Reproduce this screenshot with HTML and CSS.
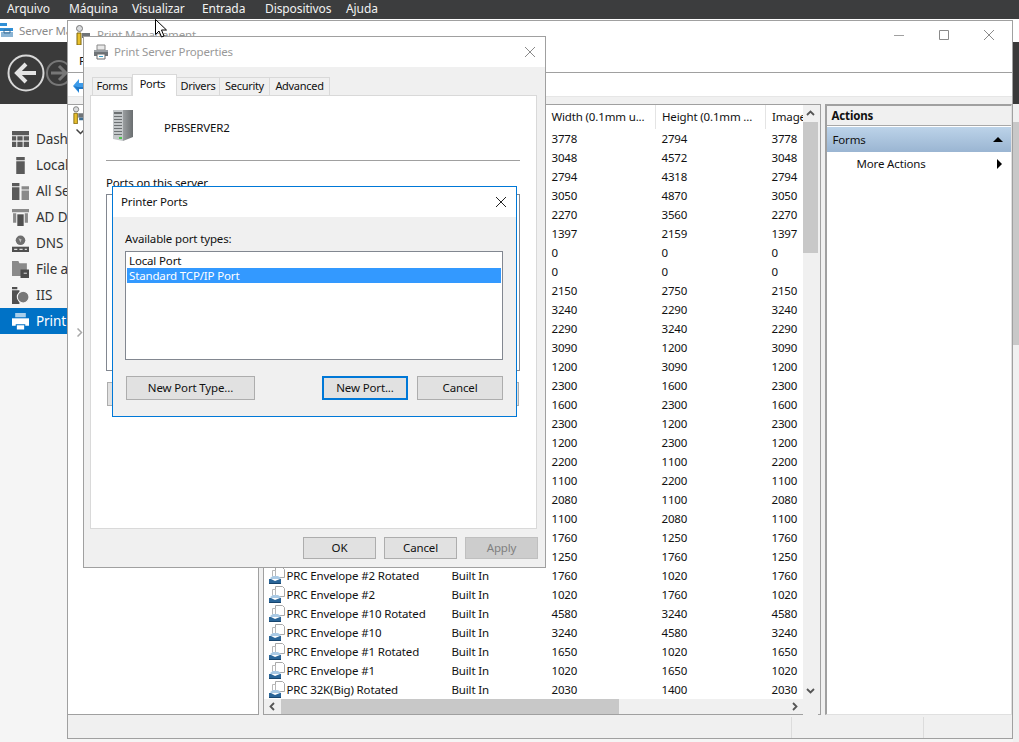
FILE: index.html
```html
<!DOCTYPE html>
<html lang="en">
<head>
<meta charset="utf-8">
<title>Print Server Properties</title>
<link rel="stylesheet" href="styles.css">
</head>
<body>
<svg class="defs" width="0" height="0">
  <defs>
    <symbol id="i-form" viewBox="0 0 17 18">
      <path d="M6.500 1.500h7l2 2v8h-9z" fill="#fff" stroke="#a8a8a8"/>
      <path d="M3.500 4.500h3v6h-3z" fill="#fff" stroke="#b8b8b8"/>
      <path d="M1 12l3-2h5l3 2-1 1H2z" fill="#a9c9e4"/>
      <path d="M0 13h2l4 2 5-2h1v4H0z" fill="#2a6598"/>
      <path d="M0 17h12v1H0z" fill="#17456e"/>
    </symbol>
    <symbol id="i-printer" viewBox="0 0 16 16">
      <path d="M4 1h8v5H4z" fill="#e8e8e8" stroke="#8a8a8a"/>
      <path d="M1 6h14v6H1z" fill="#6f7478"/>
      <path d="M1 6h14v2H1z" fill="#9a9fa3"/>
      <path d="M4 10h8v5H4z" fill="#fff" stroke="#6a6a6a"/>
      <path d="M6 12h4v1H6z" fill="#38a0c8"/>
    </symbol>
    <symbol id="i-mgmt" viewBox="0 0 16 20">
      <path d="M1 8h4v12H1z" fill="#e9c02c" stroke="#7a6410"/>
      <circle cx="3.500" cy="3.500" r="3" fill="#d9dbdd" stroke="#777"/>
      <path d="M6 8h8v5H6z" fill="#6f7478"/>
      <path d="M7 13h7v3H7z" fill="#3f6f93"/>
    </symbol>
  </defs>
</svg>

<div class="menubar">
  <span class="menu-item">Arquivo</span>
  <span class="menu-item">Máquina</span>
  <span class="menu-item">Visualizar</span>
  <span class="menu-item">Entrada</span>
  <span class="menu-item">Dispositivos</span>
  <span class="menu-item">Ajuda</span>
</div>

<div class="desktop">
  <section class="win server-manager">
    <header class="sm-title">
      <svg class="sm-logo" viewBox="0 0 14 15" width="14" height="15"><path d="M0 0h7v3H0z" fill="#2f8fd6"/><path d="M0 5h13v3H0z" fill="#2f8fd6"/><path d="M1 9h12v5H1z" fill="#8ab4d4"/><path d="M4 7h6v3H4z" fill="none" stroke="#3a6f98"/></svg>
      <span>Server Manager</span>
    </header>
    <div class="sm-nav">
      <svg class="nav-back" viewBox="0 0 38 38" width="38" height="38"><circle cx="19" cy="19" r="17.500" fill="none" stroke="#d8d8d8" stroke-width="2"/><path d="M29 19H11M19 10l-9 9 9 9" fill="none" stroke="#e4e4e4" stroke-width="4"/></svg>
      <svg class="nav-fwd" viewBox="0 0 26 26" width="26" height="26"><circle cx="13" cy="13" r="12" fill="none" stroke="#777" stroke-width="2"/><path d="M5 13h14M13 6l7 7-7 7" fill="none" stroke="#777" stroke-width="3"/></svg>
    </div>
    <div class="sm-main">
      <nav class="sm-side">
        <div class="side-row"><svg class="side-ico" viewBox="0 0 16 16"><path d="M0 0h16v4H0zM0 5h4v4H0zM0 10h4v5H0zM5 5h5v4H5zM5 10h5v5H5zM11 5h5v4h-5zM11 10h5v5h-5z" fill="#5a5a5a"/></svg><span>Dashboard</span></div>
        <div class="side-row"><svg class="side-ico" viewBox="0 0 16 16"><path d="M4 0h8v3H4zM4 4h8v12H4z" fill="#5a5a5a"/></svg><span>Local Server</span></div>
        <div class="side-row"><svg class="side-ico" viewBox="0 0 16 16"><path d="M0 0h7v3H0zM0 4h7v12H0z" fill="#5a5a5a"/><path d="M9 3h7v3H9zM9 7h7v9H9z" fill="#8a8a8a"/></svg><span>All Servers</span></div>
        <div class="side-row"><svg class="side-ico" viewBox="0 0 16 16"><path d="M0 0h16v3H0zM1 4h3v9H1zM12 4h3v9h-3z" fill="#8a8a8a"/><path d="M5 5h6v11H5z" fill="#505050"/></svg><span>AD DS</span></div>
        <div class="side-row"><svg class="side-ico" viewBox="0 0 16 16"><circle cx="8" cy="5" r="4.500" fill="#6e6e6e"/><path d="M6 3l3 1-1 3z" fill="#bcbcbc"/><path d="M0 11h16v5H0z" fill="#505050"/><path d="M2 13h3v1H2zM7 13h3v1H7zM12 13h2v1h-2z" fill="#ddd"/></svg><span>DNS</span></div>
        <div class="side-row"><svg class="side-ico" viewBox="0 0 16 16"><path d="M0 0h6l1 2h7v12H0z" fill="#8a8a8a"/><path d="M8 8h8v8H8z" fill="#4c4c4c"/><path d="M11 11h3v1h-3z" fill="#ddd"/></svg><span>File and</span></div>
        <div class="side-row"><svg class="side-ico" viewBox="0 0 16 16"><path d="M0 0h5v2H0zM0 3h7v13H0z" fill="#505050"/><circle cx="10.500" cy="9.500" r="5.500" fill="#777" stroke="#f5f5f5"/></svg><span>IIS</span></div>
        <div class="side-row selected"><svg class="side-ico" viewBox="0 0 16 16"><path d="M3 0h10v4H3z" fill="#a9cfea"/><path d="M0 5h16v7H0z" fill="#fff"/><path d="M4 11h8v5H4z" fill="#fff" stroke="#0072c6"/></svg><span>Print Services</span></div>
      </nav>
      <div class="sm-scroll"><div class="sm-thumb"></div></div>
    </div>
  </section>

  <section class="win print-mgmt">
    <header class="pm-title">
      <svg class="pm-logo" width="16" height="20"><use href="#i-mgmt"/></svg>
      <span class="pm-name">Print Management</span>
      <div class="pm-controls">
        <svg viewBox="0 0 10 10" width="10" height="10"><path d="M0 5.500h10" stroke="#a0a0a0"/></svg>
        <svg viewBox="0 0 10 10" width="10" height="10"><path d="M.5 .5h9v9h-9z" fill="none" stroke="#8a8a8a"/></svg>
        <svg viewBox="0 0 10 10" width="10" height="10"><path d="M0 0l10 10M10 0L0 10" stroke="#8a8a8a"/></svg>
      </div>
    </header>
    <div class="pm-menu"><span>File</span></div>
    <div class="pm-tools">
      <svg viewBox="0 0 12 14" width="12" height="14"><path d="M0 7l6-7v4h6v6H6v4z" fill="#3d9be9"/><path d="M1 7l5 6v-3h6V8H5z" fill="#1e78c8"/></svg>
    </div>
    <div class="pm-panes">
      <div class="pane tree">
        <svg class="tree-root" width="14" height="18"><use href="#i-mgmt"/></svg>
        <svg class="chev-down" viewBox="0 0 9 6" width="9" height="6"><path d="M.5 .5l4 4 4-4" fill="none" stroke="#444" stroke-width="1.500"/></svg>
        <svg class="chev-right" viewBox="0 0 6 9" width="6" height="9"><path d="M.5 .5l4 4-4 4" fill="none" stroke="#a8a8a8" stroke-width="1.500"/></svg>
      </div>
      <div class="pane list">
        <div class="list-view">
          <table class="forms">
            <colgroup><col class="c-name"><col class="c-type"><col class="c-num"><col class="c-num"><col class="c-num"></colgroup>
            <thead><tr><th></th><th></th><th>Width (0.1mm u...</th><th>Height (0.1mm ...</th><th>Image</th></tr></thead>
            <tbody>
              <tr><td></td><td></td><td>3778</td><td>2794</td><td>3778</td></tr>
              <tr><td></td><td></td><td>3048</td><td>4572</td><td>3048</td></tr>
              <tr><td></td><td></td><td>2794</td><td>4318</td><td>2794</td></tr>
              <tr><td></td><td></td><td>3050</td><td>4870</td><td>3050</td></tr>
              <tr><td></td><td></td><td>2270</td><td>3560</td><td>2270</td></tr>
              <tr><td></td><td></td><td>1397</td><td>2159</td><td>1397</td></tr>
              <tr><td></td><td></td><td>0</td><td>0</td><td>0</td></tr>
              <tr><td></td><td></td><td>0</td><td>0</td><td>0</td></tr>
              <tr><td></td><td></td><td>2150</td><td>2750</td><td>2150</td></tr>
              <tr><td></td><td></td><td>3240</td><td>2290</td><td>3240</td></tr>
              <tr><td></td><td></td><td>2290</td><td>3240</td><td>2290</td></tr>
              <tr><td></td><td></td><td>3090</td><td>1200</td><td>3090</td></tr>
              <tr><td></td><td></td><td>1200</td><td>3090</td><td>1200</td></tr>
              <tr><td></td><td></td><td>2300</td><td>1600</td><td>2300</td></tr>
              <tr><td></td><td></td><td>1600</td><td>2300</td><td>1600</td></tr>
              <tr><td></td><td></td><td>2300</td><td>1200</td><td>2300</td></tr>
              <tr><td></td><td></td><td>1200</td><td>2300</td><td>1200</td></tr>
              <tr><td></td><td></td><td>2200</td><td>1100</td><td>2200</td></tr>
              <tr><td></td><td></td><td>1100</td><td>2200</td><td>1100</td></tr>
              <tr><td></td><td></td><td>2080</td><td>1100</td><td>2080</td></tr>
              <tr><td></td><td></td><td>1100</td><td>2080</td><td>1100</td></tr>
              <tr><td></td><td></td><td>1760</td><td>1250</td><td>1760</td></tr>
              <tr><td></td><td></td><td>1250</td><td>1760</td><td>1250</td></tr>
              <tr><td><svg class="f-ico"><use href="#i-form"/></svg>PRC Envelope #2 Rotated</td><td>Built In</td><td>1760</td><td>1020</td><td>1760</td></tr>
              <tr><td><svg class="f-ico"><use href="#i-form"/></svg>PRC Envelope #2</td><td>Built In</td><td>1020</td><td>1760</td><td>1020</td></tr>
              <tr><td><svg class="f-ico"><use href="#i-form"/></svg>PRC Envelope #10 Rotated</td><td>Built In</td><td>4580</td><td>3240</td><td>4580</td></tr>
              <tr><td><svg class="f-ico"><use href="#i-form"/></svg>PRC Envelope #10</td><td>Built In</td><td>3240</td><td>4580</td><td>3240</td></tr>
              <tr><td><svg class="f-ico"><use href="#i-form"/></svg>PRC Envelope #1 Rotated</td><td>Built In</td><td>1650</td><td>1020</td><td>1650</td></tr>
              <tr><td><svg class="f-ico"><use href="#i-form"/></svg>PRC Envelope #1</td><td>Built In</td><td>1020</td><td>1650</td><td>1020</td></tr>
              <tr><td><svg class="f-ico"><use href="#i-form"/></svg>PRC 32K(Big) Rotated</td><td>Built In</td><td>2030</td><td>1400</td><td>2030</td></tr>
            </tbody>
          </table>
        </div>
        <div class="vscroll">
          <svg class="sb-btn" viewBox="0 0 15 17"><path d="M4 10l3.500-3.500L11 10" fill="none" stroke="#555" stroke-width="1.800"/></svg>
          <div class="vtrack"><div class="vthumb"></div></div>
          <svg class="sb-btn" viewBox="0 0 15 17"><path d="M4 7l3.500 3.500L11 7" fill="none" stroke="#555" stroke-width="1.800"/></svg>
        </div>
        <div class="hscroll">
          <svg class="sb-h" viewBox="0 0 17 15"><path d="M10 4L6.500 7.500 10 11" fill="none" stroke="#555" stroke-width="1.800"/></svg>
          <div class="htrack"><div class="hthumb"></div></div>
          <svg class="sb-h" viewBox="0 0 17 15"><path d="M7 4l3.500 3.500L7 11" fill="none" stroke="#555" stroke-width="1.800"/></svg>
        </div>
      </div>
      <div class="pane actions">
        <div class="act-head">Actions</div>
        <div class="act-group"><span>Forms</span><i class="tri-up"></i></div>
        <div class="act-item"><span>More Actions</span><i class="tri-right"></i></div>
      </div>
    </div>
    <footer class="pm-status"><div class="st-a"></div><div class="st-b"></div><div class="st-c"></div></footer>
  </section>

  <section class="win props">
    <header class="dlg-title">
      <svg class="props-logo" width="16" height="16"><use href="#i-printer"/></svg>
      <span>Print Server Properties</span>
      <svg class="props-close" viewBox="0 0 10 10" width="10" height="10"><path d="M0 0l10 10M10 0L0 10" stroke="#8a8a8a"/></svg>
    </header>
    <div class="props-body">
      <div class="tabs">
        <span class="tab t-forms">Forms</span>
        <span class="tab active t-ports">Ports</span>
        <span class="tab t-drivers">Drivers</span>
        <span class="tab t-security">Security</span>
        <span class="tab t-advanced">Advanced</span>
      </div>
      <div class="tab-panel">
        <div class="srv-row">
          <svg class="srv-ico" viewBox="0 0 20 32" width="20" height="32">
            <defs><linearGradient id="srvside" x1="0" x2="1" y1="0" y2="0"><stop offset="0" stop-color="#9a9ea0"/><stop offset="1" stop-color="#6a6e70"/></linearGradient></defs>
            <path d="M0 1l10 0 0 31-10-2z" fill="#c4c8ca"/>
            <path d="M10 1l10 0 0 27-10 4z" fill="url(#srvside)"/>
            <path d="M1 3h8v2H1zM1 7h8v1H1zM1 10h8v1H1zM1 13h8v1H1zM1 16h8v1H1zM1 19h8v1H1zM1 22h8v1H1zM1 25h8v1H1z" fill="#6d7173"/>
            <path d="M6 28h3v2H6z" fill="#4fc34f"/>
          </svg>
          <span class="srv-name">PFBSERVER2</span>
        </div>
        <hr class="rule">
        <div class="ports-label">Ports on this server</div>
        <div class="ports-box"></div>
        <div class="ports-btns">
          <span class="btn grow"></span>
          <span class="btn grow"></span>
          <span class="btn grow"></span>
        </div>
      </div>
      <div class="dlg-foot">
        <span class="btn w73">OK</span>
        <span class="btn w73">Cancel</span>
        <span class="btn w73 disabled">Apply</span>
      </div>
    </div>
  </section>

  <section class="win ports-dlg">
    <header class="pp-title">
      <span>Printer Ports</span>
      <svg viewBox="0 0 10 10" width="10" height="10"><path d="M0 0l10 10M10 0L0 10" stroke="#222"/></svg>
    </header>
    <div class="pp-body">
      <div class="pp-label">Available port types:</div>
      <div class="pp-list">
        <div class="pp-opt">Local Port</div>
        <div class="pp-opt sel">Standard TCP/IP Port</div>
      </div>
      <div class="pp-btns">
        <span class="btn b-type">New Port Type...</span>
        <span class="btn b-new">New Port...</span>
        <span class="btn b-cancel">Cancel</span>
      </div>
    </div>
  </section>

  <svg class="cursor" viewBox="0 0 12 19" width="12" height="19"><path d="M.5 .5v15l3.500-3.500 2.500 6 2.500-1-2.500-6h5z" fill="#fff" stroke="#000"/></svg>
</div>
</body>
</html>
```
FILE: styles.css
```css
* { box-sizing: border-box; }
html, body { margin: 0; padding: 0; }
body {
  width: 1019px; height: 742px; overflow: hidden; background: #f0f0f0;
  font: 11.500px/16px "Noto Sans", "Liberation Sans", sans-serif; letter-spacing: -0.15px; color: #111;
  display: flex; flex-direction: column;
}
.defs { position: absolute; }

.menubar { height: 19px; background: #3c3d3e; color: #f2f2f2; font-size: 12px; letter-spacing: -0.1px; line-height: 17px; position: relative; flex: none; }
.menu-item { position: absolute; top: 0; white-space: nowrap; }
.menu-item:nth-child(1) { left: 7px; }
.menu-item:nth-child(2) { left: 69px; }
.menu-item:nth-child(3) { left: 132px; }
.menu-item:nth-child(4) { left: 202px; }
.menu-item:nth-child(5) { left: 265px; }
.menu-item:nth-child(6) { left: 346px; }

.desktop { position: relative; flex: 1; }
.win { position: absolute; }

/* Server Manager, behind everything */
.server-manager { left: 0; top: 0; width: 1019px; height: 723px; display: flex; flex-direction: column; background: #f5f5f5; }
.sm-title { height: 23px; background: #fff; display: flex; align-items: center; gap: 5px; color: #8a8a8a; flex: none; }
.sm-nav { height: 62px; background: #3a3a3a; display: flex; align-items: center; flex: none; padding-left: 7px; gap: 1px; }
.sm-main { flex: 1; display: flex; justify-content: space-between; min-height: 0; }
.sm-side { padding-top: 22px; width: 68px; overflow: hidden; }
.side-row { height: 26px; display: flex; align-items: center; font-size: 13.500px; letter-spacing: -0.1px; color: #333; white-space: nowrap; padding-left: 12px; gap: 7px; }
.side-ico { width: 17px; height: 17px; flex: none; }
.side-row.selected { background: #0072c6; color: #fff; }
.sm-scroll { width: 6px; padding-top: 18px; background: #f0f0f0; }
.sm-thumb { height: 223px; background: #c8c8c8; }

/* Print Management */
.print-mgmt { left: 67px; top: 1px; width: 946px; height: 719px; border: 1px solid #a0a0a0; background: #fff; display: flex; flex-direction: column; }
.pm-title { height: 28px; display: flex; align-items: center; color: #999; flex: none; padding-left: 8px; gap: 5px; }
.pm-controls { margin-left: auto; display: flex; gap: 35px; padding-right: 18px; }
.pm-controls svg { display: block; }
.pm-menu { height: 24px; border-bottom: 1px solid #a0a0a0; padding: 4px 0 0 11px; flex: none; }
.pm-tools { height: 23px; padding: 6px 0 0 5px; flex: none; }
.pm-tools svg { display: block; }
.pm-panes { flex: 1; background: #f0f0f0; padding-top: 7px; display: flex; min-height: 0; border-top: 1px solid #e6e6e6; }
.pane { background: #fff; border: 1px solid #a0a0a0; position: relative; }
.tree { width: 192px; border-left: 0; }
.tree-root { position: absolute; left: 5px; top: 1px; }
.chev-down { position: absolute; left: 8px; top: 24px; }
.chev-right { position: absolute; left: 9px; top: 223px; }
.list { width: 558px; margin-left: 4px; display: grid; grid-template-columns: 539px 17px; grid-template-rows: 594px 17px; background: #f0f0f0; }
.list-view { overflow: hidden; background: #fff; }
.forms { border-collapse: collapse; table-layout: fixed; width: 539px; }
.c-name { width: 181px; }
.c-type { width: 100px; }
.c-num { width: 110px; }
.forms th { height: 24px; font-weight: normal; text-align: left; padding: 0 0 0 6px; white-space: nowrap; overflow: hidden; border-right: 1px solid #e4e4e4; }
.forms th:nth-child(1), .forms th:nth-child(2), .forms th:last-child { border-right: 0; }
.forms td { height: 19px; padding: 0 0 0 6px; white-space: nowrap; line-height: 18px; overflow: hidden; }
.forms td:first-child { padding-left: 5px; }
.f-ico { width: 17px; height: 18px; vertical-align: top; margin-top: -1px; }
.vscroll { grid-row: 1 / span 2; grid-column: 2; background: #f0f0f0; width: 15px; display: flex; flex-direction: column; }
.sb-btn { width: 15px; height: 17px; flex: none; }
.vtrack { flex: 1; }
.vthumb { height: 131px; background: #c8c8c8; }
.vscroll .sb-btn:last-child { margin-bottom: 17px; }
.hscroll { grid-row: 2; grid-column: 1; background: #f0f0f0; display: flex; height: 15px; }
.sb-h { width: 17px; height: 15px; flex: none; }
.htrack { flex: 1; }
.hthumb { width: 338px; height: 15px; background: #c8c8c8; }

.actions { width: 187px; margin-left: 4px; border-width: 2px 1px 1px 2px; border-right-color: #e0e0e0; border-bottom-color: #e0e0e0; }
.act-head { height: 20px; background: #f0f0f0; border-bottom: 1px solid #a8a8a8; font-weight: bold; padding: 2px 0 0 4px; }
.act-group { height: 25px; margin-top: 1px; background: linear-gradient(#bcd3e9, #9ab5d2); display: flex; align-items: center; justify-content: space-between; padding: 0 8px 0 5px; }
.act-item { height: 24px; display: flex; align-items: center; justify-content: space-between; padding: 0 9px 0 29px; }
.tri-up { width: 0; height: 0; border: 5px solid transparent; border-top: 0; border-bottom: 5px solid #000; }
.tri-right { width: 0; height: 0; border: 5px solid transparent; border-right: 0; border-left: 5px solid #000; }

.pm-status { height: 23px; background: #f0f0f0; display: flex; flex: none; padding: 2px 0 0 0; }
.st-a { width: 724px; border-right: 1px solid #dcdcdc; }
.st-b { width: 132px; border-right: 1px solid #dcdcdc; }
.st-c { flex: 1; }

/* Print Server Properties */
.props { left: 83px; top: 17px; width: 463px; height: 532px; border: 1px solid #a0a0a0; background: #f0f0f0; display: flex; flex-direction: column; }
.dlg-title { height: 30px; background: #fff; color: #999; display: flex; align-items: center; padding-left: 9px; gap: 5px; flex: none; }
.props-close { margin-left: auto; margin-right: 10px; }
.props-body { flex: 1; display: flex; flex-direction: column; padding: 7px 8px 8px 6px; min-height: 0; }
.tabs { display: flex; height: 21px; align-items: flex-end; padding-left: 2px; flex: none; position: relative; z-index: 1; }
.tab { height: 18px; line-height: 16px; border: 1px solid #d9d9d9; border-left: 0; border-bottom: 0; text-align: center; background: #f0f0f0; font-size: 11px; letter-spacing: -0.3px; }
.t-forms { width: 40px; border-left: 1px solid #d9d9d9; }
.t-ports { width: 45px; padding-right: 4px; }
.t-drivers { width: 43px; }
.t-security { width: 50px; }
.t-advanced { width: 60px; }
.tab.active { height: 22px; background: #fff; border-left: 1px solid #d9d9d9; margin-bottom: -1px; line-height: 18px; }
.tab-panel { flex: 1; background: #fff; border: 1px solid #d9d9d9; padding: 12px 16px 0 15px; display: flex; flex-direction: column; min-height: 0; }
.srv-row { display: flex; align-items: center; height: 34px; padding-left: 7px; gap: 31px; flex: none; }
.srv-ico { flex: none; }
.srv-name { margin-top: 6px; }
.rule { margin: 18px 0 0 0; border: 0; border-top: 1px solid #a0a0a0; flex: none; width: 414px; }
.ports-label { margin-top: 14px; flex: none; }
.ports-box { height: 177px; width: 414px; border: 1px solid #828790; background: #fff; margin-top: 3px; flex: none; }
.ports-btns { display: flex; gap: 8px; margin-top: 11px; width: 412px; margin-left: 1px; flex: none; }
.btn { height: 24px; background: #e1e1e1; border: 1px solid #adadad; display: flex; align-items: center; justify-content: center; white-space: nowrap; }
.grow { flex: 1; }
.dlg-foot { display: flex; justify-content: flex-end; gap: 8px; padding-top: 8px; flex: none; height: 30px; margin-right: -1px; }
.w73 { width: 73px; height: 22px; }
.disabled { background: #cdcdcd; border-color: #bfbfbf; color: #808080; }

/* Printer Ports */
.ports-dlg { left: 112px; top: 167px; width: 405px; height: 231px; border: 1px solid #0078d7; background: #f0f0f0; display: flex; flex-direction: column; }
.pp-title { height: 30px; background: #fff; display: flex; align-items: center; justify-content: space-between; padding: 0 10px 0 8px; flex: none; }
.pp-body { flex: 1; padding: 13px 13px 0 12px; }
.pp-label { height: 20px; padding-top: 1px; }
.pp-list { height: 109px; margin-top: 1px; background: #fff; border: 1px solid #828790; padding: 1px; }
.pp-opt { height: 15px; line-height: 15px; padding-left: 2px; }
.pp-opt.sel { background: #3399ff; color: #fff; }
.pp-btns { display: flex; margin-top: 16px; padding-left: 1px; }
.b-type { width: 129px; }
.b-new { width: 86px; margin-left: 67px; border: 2px solid #0078d7; }
.b-cancel { width: 86px; margin-left: 9px; }

.cursor { position: absolute; left: 155px; top: 0; z-index: 5; }
```
